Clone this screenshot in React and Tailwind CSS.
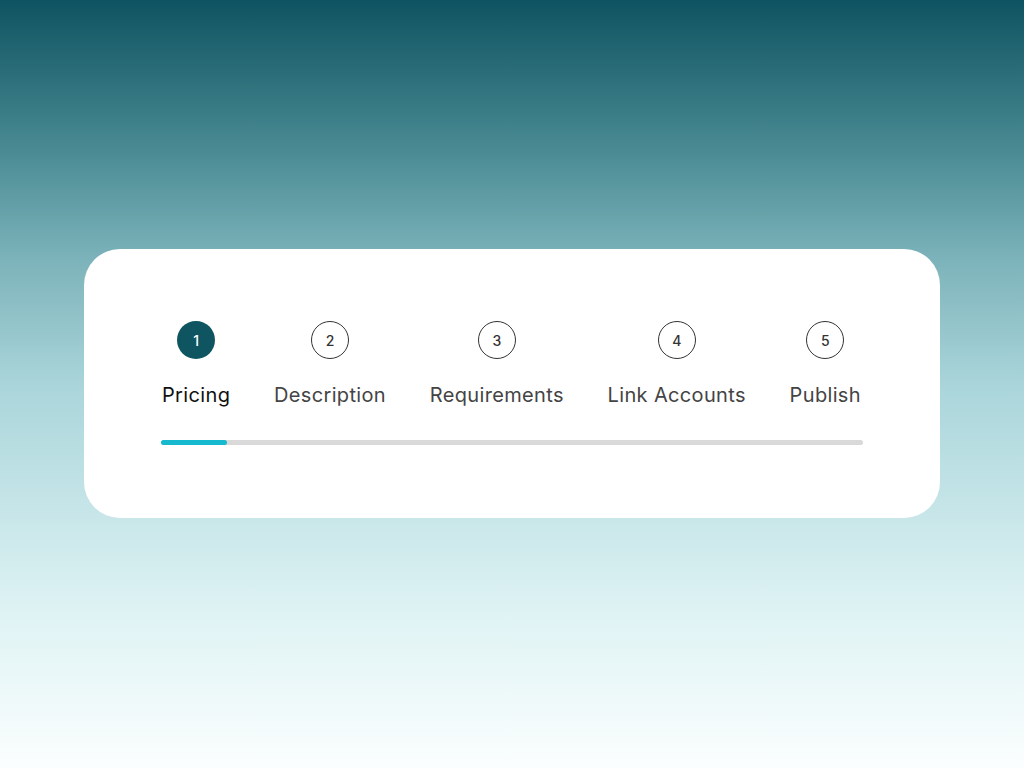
const steps = ["Pricing", "Description", "Requirements", "Link Accounts", "Publish"];

function Step({ index, label, active }) {
  return (
    <div className="flex flex-col items-center gap-[22px]">
      <div
        className={
          active
            ? "w-[38px] h-[38px] rounded-full bg-[#0e5461] text-white flex items-center justify-center text-[14px] font-medium"
            : "w-[38px] h-[38px] rounded-full border border-[#333333] text-[#333333] flex items-center justify-center text-[14px] font-medium"
        }
      >
        {index}
      </div>
      <span
        className={
          active
            ? "text-[20px] leading-[28px] tracking-[0.35px] text-[#111111]"
            : "text-[20px] leading-[28px] tracking-[0.35px] text-[#444444]"
        }
      >
        {label}
      </span>
    </div>
  );
}

export default function App() {
  return (
    <div
      className="w-[1024px] h-[768px] flex items-start justify-center pt-[249px] bg-[linear-gradient(180deg,#0e5361_0%,#4b8c94_20%,#7ab1b8_33%,#a9d5da_50%,#dff3f4_80%,#fbfefe_100%)]"
      style={{ fontFamily: "Inter, 'Noto Sans', sans-serif" }}
    >
      <div className="w-[856px] bg-white rounded-[36px] pt-[72px] pb-[73px] px-[77px]">
        <div className="flex justify-between pl-[1px] pr-[2px]">
          {steps.map((s, i) => (
            <Step key={s} index={i + 1} label={s} active={i === 0} />
          ))}
        </div>
        <div className="mt-[31px] h-[5px] rounded-full bg-[#d9d9d9]">
          <div className="h-full w-[66px] rounded-full bg-[#17b9cf]" />
        </div>
      </div>
    </div>
  );
}
